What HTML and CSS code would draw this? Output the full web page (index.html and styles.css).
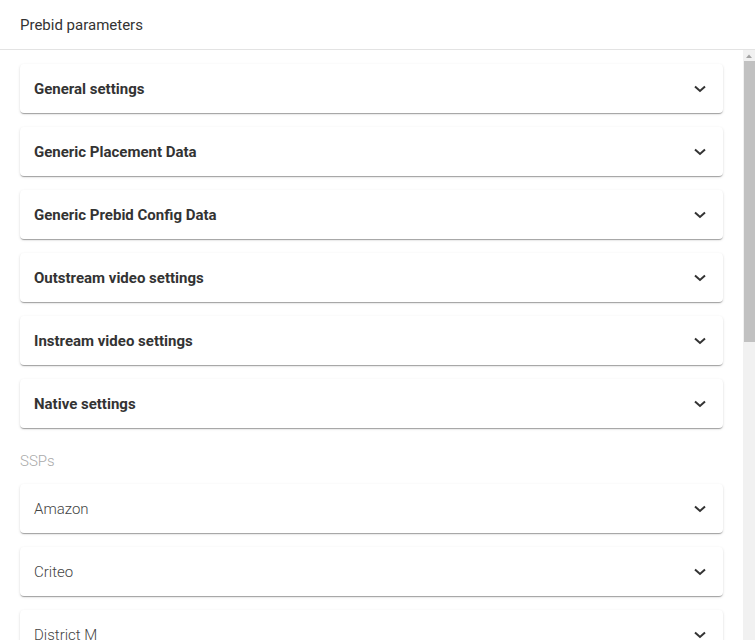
FILE: index.html
```html
<!DOCTYPE html>
<html>
<head>
<meta charset="utf-8">
<link rel="stylesheet" href="styles.css">
</head>
<body>
<div class="dialog">
  <div class="header">Prebid parameters</div>
  <div class="body-row">
    <div class="content">
      <div class="panel"><span class="title bold">General settings</span><svg class="chev" viewBox="0 0 12 8"><path d="M1 1.5l5 4.5 5-4.5"/></svg></div>
      <div class="panel"><span class="title bold">Generic Placement Data</span><svg class="chev" viewBox="0 0 12 8"><path d="M1 1.5l5 4.5 5-4.5"/></svg></div>
      <div class="panel"><span class="title bold">Generic Prebid Config Data</span><svg class="chev" viewBox="0 0 12 8"><path d="M1 1.5l5 4.5 5-4.5"/></svg></div>
      <div class="panel"><span class="title bold">Outstream video settings</span><svg class="chev" viewBox="0 0 12 8"><path d="M1 1.5l5 4.5 5-4.5"/></svg></div>
      <div class="panel"><span class="title bold">Instream video settings</span><svg class="chev" viewBox="0 0 12 8"><path d="M1 1.5l5 4.5 5-4.5"/></svg></div>
      <div class="panel"><span class="title bold">Native settings</span><svg class="chev" viewBox="0 0 12 8"><path d="M1 1.5l5 4.5 5-4.5"/></svg></div>
      <div class="section-label">SSPs</div>
      <div class="panel"><span class="title">Amazon</span><svg class="chev" viewBox="0 0 12 8"><path d="M1 1.5l5 4.5 5-4.5"/></svg></div>
      <div class="panel"><span class="title">Criteo</span><svg class="chev" viewBox="0 0 12 8"><path d="M1 1.5l5 4.5 5-4.5"/></svg></div>
      <div class="panel"><span class="title">District M</span><svg class="chev" viewBox="0 0 12 8"><path d="M1 1.5l5 4.5 5-4.5"/></svg></div>
    </div>
    <div class="scrollbar">
      <div class="sb-button"><svg viewBox="0 0 12 12"><path d="M3 8h6L6 4.5z"/></svg></div>
      <div class="sb-thumb"></div>
    </div>
  </div>
</div>
</body>
</html>
```
FILE: styles.css
```css
html, body {
  margin: 0;
  padding: 0;
  background: #fff;
  overflow: hidden;
}
body {
  font-family: Roboto, "Liberation Sans", Arial, sans-serif;
  color: #333;
}
.dialog {
  width: 755px;
  height: 640px;
  display: flex;
  flex-direction: column;
}
.header {
  flex: none;
  height: 50px;
  box-sizing: border-box;
  padding: 0 20px;
  display: flex;
  align-items: center;
  font-size: 15px;
  color: #333;
  border-bottom: 1px solid #e3e3e3;
}
.body-row {
  flex: 1;
  min-height: 0;
  display: flex;
  overflow: hidden;
}
.content {
  flex: 1;
  min-width: 0;
  padding: 14px 20px;
  display: flex;
  flex-direction: column;
  gap: 14px;
}
.panel {
  flex: none;
  height: 49px;
  box-sizing: border-box;
  background: #fff;
  border-radius: 4px;
  box-shadow: 0 2px 1px -1px rgba(0,0,0,0.2), 0 1px 1px 0 rgba(0,0,0,0.14), 0 1px 3px 0 rgba(0,0,0,0.12);
  display: flex;
  align-items: center;
  justify-content: space-between;
  padding: 0 17px 0 14px;
}
.title {
  font-size: 15px;
  font-weight: 300;
  color: #444;
}
.title.bold {
  font-weight: 700;
  color: #333;
}
.chev {
  width: 12px;
  height: 8px;
  fill: none;
  stroke: #333;
  stroke-width: 2;
}
.section-label {
  flex: none;
  font-size: 15px;
  line-height: 18px;
  font-weight: 300;
  color: #aaa;
  margin-top: 10px;
}
.scrollbar {
  flex: none;
  width: 12px;
  background: #f1f1f1;
  display: flex;
  flex-direction: column;
  align-items: flex-end;
}
.sb-button {
  width: 12px;
  height: 11px;
}
.sb-button svg {
  display: block;
  width: 12px;
  height: 12px;
  fill: #a3a3a3;
}
.sb-thumb {
  width: 11px;
  height: 281px;
  background: #c1c1c1;
}
```
